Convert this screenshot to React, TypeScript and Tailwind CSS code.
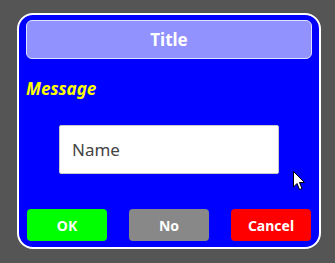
export default function App() {
  return (
    <div className="relative h-[263px] w-[335px] overflow-hidden bg-[#555555] pt-[13px] pl-[17px] font-['Noto_Sans',sans-serif]">
      <div className="flex h-[236px] w-[304px] flex-col rounded-[16px] border-2 border-white bg-[#0000ff] px-[7px] pt-[5px] pb-[6px]">
        <div className="flex h-[39px] items-center justify-center rounded-[6px] border border-[#e0e0ff] bg-[#9292ff] text-[17px] font-bold text-white">
          Title
        </div>
        <div className="mt-[18px] text-[17px] leading-[24px] font-bold italic text-[#ffff00]">Message</div>
        <div className="mt-[24px] flex justify-center">
          <div className="flex h-[49px] w-[220px] items-center rounded-[2px] border border-[#c8c8c8] bg-white px-[12px] text-[17px] text-[#444444]">
            Name
          </div>
        </div>
        <div className="mt-auto flex justify-between px-[1px]">
          <button className="h-[32px] w-[80px] rounded-[4px] bg-[#00ff00] text-[14px] font-bold text-white">OK</button>
          <button className="h-[32px] w-[80px] rounded-[4px] bg-[#888888] text-[14px] font-bold text-white">No</button>
          <button className="h-[32px] w-[80px] rounded-[4px] bg-[#ff0000] text-[14px] font-bold text-white">Cancel</button>
        </div>
      </div>
      <svg className="absolute top-[171px] left-[293px]" width="13" height="20" viewBox="0 0 13 20">
        <path d="M0.5 0.5 L0.5 16 L4 12.5 L6.5 18.5 L9 17.5 L6.5 11.5 L11.5 11.5 Z" fill="white" stroke="black" strokeWidth="1" />
      </svg>
    </div>
  );
}
